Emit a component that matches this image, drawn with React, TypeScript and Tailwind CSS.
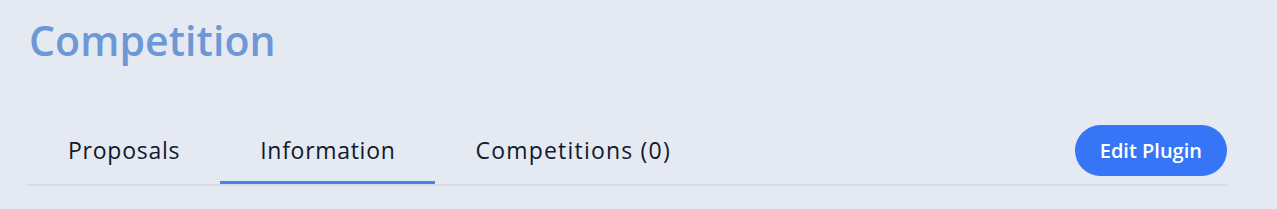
import React from "react";

export default function App() {
  const font = { fontFamily: '"Open Sans", "Noto Sans", sans-serif' };
  return (
    <div className="w-[1277px] h-[209px] bg-[#e5e9f1] pl-[28px] pr-[50px] pt-[12px]" style={font}>
      <h1 className="text-[41px] leading-[56px] font-semibold text-[#6d98d6] pl-[1px] tracking-[0.1px]">Competition</h1>
      <div className="mt-[50px] flex items-end justify-between border-b-2 border-[#d5dae3]">
        <div className="flex">
          <div className="px-[40px] h-[66px] pt-[2px] flex items-center text-[23px] tracking-[0.75px] font-medium text-[#0f1a2e] border-b-[3px] border-transparent">Proposals</div>
          <div className="px-[40px] h-[66px] pt-[2px] flex items-center text-[23px] tracking-[0.7px] font-medium text-[#0f1a2e] border-b-[3px] border-[#4a7fef]">Information</div>
          <div className="px-[40px] h-[66px] pt-[2px] flex items-center text-[23px] tracking-[1.2px] font-medium text-[#0f1a2e] border-b-[3px] border-transparent">Competitions (0)</div>
        </div>
        <button className="mb-[8px] h-[51px] px-[25px] rounded-full bg-[#3575f6] text-white text-[20px] tracking-[0px] font-semibold">Edit Plugin</button>
      </div>
    </div>
  );
}
